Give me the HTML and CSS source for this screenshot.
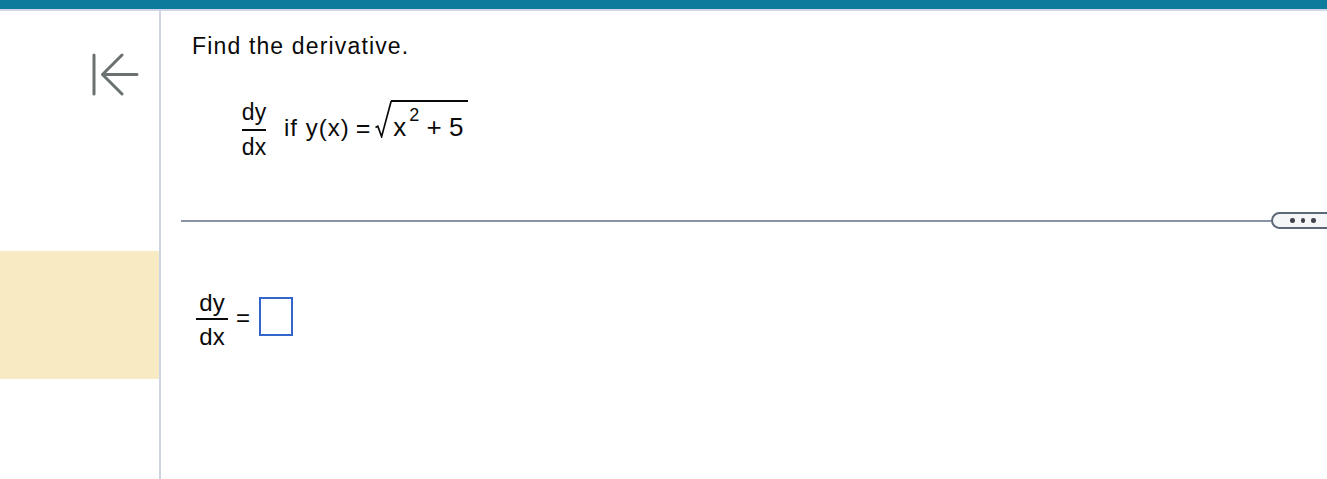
FILE: index.html
```html
<!DOCTYPE html>
<html lang="en">
<head>
<meta charset="utf-8">
<title>Find the derivative</title>
<link rel="stylesheet" href="styles.css">
</head>
<body>
<div class="topbar"></div>
<div class="main">
  <aside class="sidebar">
    <button class="collapse" aria-label="Collapse">
      <svg class="collapse-icon" width="52" height="44" viewBox="0 0 52 44">
        <path d="M6 3 V42" />
        <path d="M34 3 L14.5 22.5 L34 42 M14.5 22.5 H49" />
      </svg>
    </button>
    <div class="highlight"></div>
  </aside>
  <section class="content">
    <div class="question">
      <p class="prompt">Find the derivative.</p>
      <div class="expr">
        <span class="frac q-frac"><span class="num">dy</span><span class="bar"></span><span class="den">dx</span></span>
        <span class="rhs">
          <span class="txt">if y(x)</span>
          <span class="op">=</span>
          <span class="sqrt">
            <svg class="radical" width="17" height="38" viewBox="0 0 17 38"><path d="M0.5 27.5 L2.8 26.2 L6.6 36.6 L16.2 1" /></svg>
            <span class="radicand">x<sup class="sup">2</sup> + 5</span>
          </span>
        </span>
      </div>
    </div>
    <div class="divider">
      <div class="rule"></div>
      <button class="more" aria-label="More"><span class="dot"></span><span class="dot"></span><span class="dot"></span></button>
    </div>
    <div class="answer">
      <span class="frac a-frac"><span class="num">dy</span><span class="bar"></span><span class="den">dx</span></span>
      <span class="eq">=</span>
      <span class="input-box"></span>
    </div>
  </section>
</div>
</body>
</html>
```
FILE: styles.css
```css
html, body {
  margin: 0;
  padding: 0;
  background: #ffffff;
  overflow: hidden;
}
body {
  font-family: "Liberation Sans", Arial, Helvetica, sans-serif;
  color: #0a0a0a;
  width: 1327px;
  height: 479px;
}
.topbar {
  height: 9px;
  background: #0b7c9c;
  border-bottom: 2px solid #d0d6e6;
}
.main {
  display: flex;
  height: 468px;
}
.sidebar {
  width: 159px;
  flex: 0 0 159px;
  border-right: 2px solid #cdd3e3;
  display: flex;
  flex-direction: column;
}
.collapse {
  margin: 41px 0 0 88px;
  padding: 0;
  border: 0;
  background: none;
  width: 52px;
  height: 44px;
  display: block;
}
.collapse-icon {
  display: block;
  fill: none;
  stroke: #6b7070;
  stroke-width: 3;
  stroke-linecap: round;
  stroke-linejoin: round;
}
.highlight {
  margin-top: 155px;
  height: 128px;
  background: #f8ebc3;
}
.content {
  flex: 1;
  min-width: 0;
  overflow: hidden;
  padding-top: 22px;
}
.question {
  padding-left: 31px;
}
.prompt {
  margin: 0;
  font-size: 23px;
  line-height: 26px;
  letter-spacing: 1.15px;
}
.expr {
  margin-top: 42px;
  margin-left: 50px;
  display: flex;
  align-items: flex-start;
}
.frac {
  display: inline-flex;
  flex-direction: column;
  align-items: center;
}
.q-frac {
  width: 24px;
  font-size: 23px;
}
.q-frac .num, .q-frac .den {
  line-height: 22px;
}
.frac .bar {
  align-self: stretch;
  height: 2px;
  background: #0a0a0a;
}
.q-frac .bar {
  margin: 6px 0 5px 0;
}
.rhs {
  display: flex;
  align-items: flex-end;
  margin-left: 18px;
  margin-top: -1px;
  font-size: 24px;
}
.txt {
  line-height: 24px;
  letter-spacing: 1px;
}
.op {
  line-height: 24px;
  font-size: 25px;
  margin-left: 6px;
}
.sqrt {
  display: flex;
  align-items: flex-end;
  margin-left: 5px;
}
.radical {
  display: block;
  fill: none;
  stroke: #0a0a0a;
  stroke-width: 1.7;
  stroke-linejoin: miter;
  margin-bottom: 2px;
}
.radicand {
  border-top: 2px solid #0a0a0a;
  font-size: 26px;
  line-height: 26px;
  padding: 12px 5px 0 2px;
  margin-left: -1px;
}
.sup {
  font-size: 18px;
  line-height: 18px;
  vertical-align: baseline;
  position: relative;
  top: -15px;
  margin-left: 3px;
}
.divider {
  display: flex;
  align-items: center;
  margin-top: 54px;
  padding-left: 20px;
  height: 17px;
}
.rule {
  flex: 1;
  height: 2px;
  background: #8a93a3;
}
.more {
  width: 66px;
  height: 17px;
  margin-right: -10px;
  border: 2px solid #5c6878;
  border-radius: 9px;
  background: #f5f6f8;
  padding: 0 0 0 17px;
  display: flex;
  align-items: center;
  gap: 6px;
  box-sizing: border-box;
  flex: 0 0 66px;
}
.dot {
  width: 4.5px;
  height: 4.5px;
  border-radius: 50%;
  background: #3f444c;
}
.answer {
  margin-top: 62px;
  padding-left: 35px;
  display: flex;
  align-items: center;
  font-size: 24px;
}
.a-frac {
  width: 32px;
}
.a-frac .num, .a-frac .den {
  line-height: 24px;
}
.a-frac .bar {
  margin: 3px 0 5px 0;
}
.eq {
  margin-left: 8px;
  line-height: 24px;
  margin-top: -4px;
}
.input-box {
  width: 30px;
  height: 35px;
  border: 2px solid #3366cc;
  margin-left: 9px;
  margin-top: -7px;
}
```
